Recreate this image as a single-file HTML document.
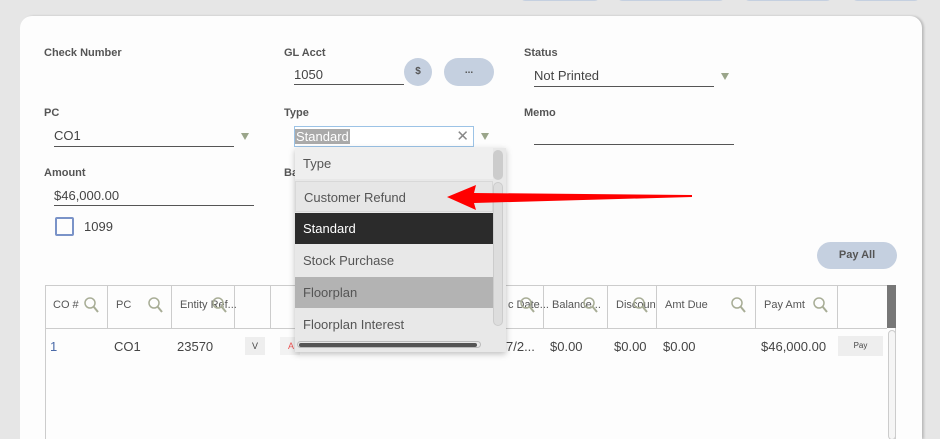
<!DOCTYPE html>
<html><head><style>
*{box-sizing:border-box;margin:0;padding:0}
html,body{width:940px;height:439px;overflow:hidden}
body{background:#e6e6e6;font-family:"Liberation Sans",sans-serif;position:relative;color:#444}
.a{position:absolute}
.card{left:20px;top:16px;width:902px;height:423px;background:#fdfdfd;border-radius:12px 12px 0 0;box-shadow:2px 0 2px #bbb}
.lbl{font-size:11px;font-weight:bold;color:#555}
.inp{font-size:13px;color:#444;border-bottom:1px solid #555;padding-left:0}
.tri{width:0;height:0;border-left:4px solid transparent;border-right:4px solid transparent;border-top:7px solid #9aa58a}
.btn{background:#c5d0e0;border-radius:14px;font-size:10px;font-weight:bold;color:#555;text-align:center}
.th{font-size:11px;color:#555;top:299px}
.vl{top:286px;width:1px;height:42px;background:#ccc}
.td{font-size:13px;color:#444;top:339px}
.mg{position:absolute;top:297px}
.dd div.it{position:absolute;left:0;width:198px;height:31px;font-size:13px;padding:8px 8px;color:#555}
</style></head><body>
<div class="a btn" style="left:520px;top:-10px;width:80px;height:11px"></div>
<div class="a btn" style="left:617px;top:-10px;width:108px;height:11px"></div>
<div class="a btn" style="left:744px;top:-10px;width:88px;height:11px"></div>
<div class="a btn" style="left:852px;top:-10px;width:68px;height:11px"></div>
<div class="a card"></div>

<div class="a lbl" style="left:44px;top:47px">Check Number</div>
<div class="a lbl" style="left:284px;top:47px">GL Acct</div>
<div class="a inp" style="left:294px;top:67px;width:110px;height:18px">1050</div>
<div class="a btn" style="left:404px;top:58px;width:28px;height:28px;line-height:28px">$</div>
<div class="a btn" style="left:444px;top:58px;width:50px;height:28px;line-height:26px">...</div>
<div class="a lbl" style="left:524px;top:47px">Status</div>
<div class="a inp" style="left:534px;top:68px;width:180px;height:19px">Not Printed</div>
<div class="a tri" style="left:721px;top:73px"></div>

<div class="a lbl" style="left:44px;top:107px">PC</div>
<div class="a inp" style="left:54px;top:128px;width:180px;height:19px">CO1</div>
<div class="a tri" style="left:241px;top:133px"></div>
<div class="a lbl" style="left:284px;top:107px">Type</div>
<div class="a" style="left:294px;top:126px;width:180px;height:21px;border:1px solid #9cc3e6;background:#fff;font-size:13px;color:#fff;line-height:19px"><span style="background:#aaa;padding:0 1px">Standard</span><span style="position:absolute;right:4px;top:0;color:#888;font-size:15px;line-height:19px">✕</span></div>
<div class="a tri" style="left:481px;top:133px"></div>
<div class="a lbl" style="left:524px;top:107px">Memo</div>
<div class="a" style="left:534px;top:144px;width:200px;height:1px;background:#555"></div>

<div class="a lbl" style="left:44px;top:167px">Amount</div>
<div class="a lbl" style="left:284px;top:167px">Ba</div>
<div class="a inp" style="left:54px;top:188px;width:200px;height:18px">$46,000.00</div>
<div class="a" style="left:55px;top:217px;width:19px;height:19px;border:2px solid #7a93c8;border-radius:2px"></div>
<div class="a" style="left:84px;top:219px;font-size:13px">1099</div>

<div class="a btn" style="left:817px;top:242px;width:80px;height:27px;line-height:27px;font-size:11px">Pay All</div>

<div class="a" style="left:45px;top:285px;width:851px;height:160px;border:1px solid #ccc;background:#fdfdfd"></div>
<div class="a" style="left:45px;top:328px;width:842px;height:1px;background:#ccc"></div>
<div class="a" style="left:887px;top:285px;width:9px;height:43px;background:#777"></div>
<div class="a" style="left:888px;top:330px;width:8px;height:110px;border:1px solid #ccc;border-radius:4px;background:#f5f5f5"></div>
<div class="a vl" style="left:107px"></div><div class="a vl" style="left:171px"></div><div class="a vl" style="left:234px"></div><div class="a vl" style="left:270px"></div><div class="a vl" style="left:543px"></div><div class="a vl" style="left:607px"></div><div class="a vl" style="left:656px"></div><div class="a vl" style="left:755px"></div><div class="a vl" style="left:837px"></div>
<div class="a th" style="left:53px">CO #</div><div class="a th" style="left:116px">PC</div><div class="a th" style="left:180px">Entity Ref...</div><div class="a th" style="left:508px">c Date...</div><div class="a th" style="left:552px">Balance...</div><div class="a th" style="left:616px">Discoun</div><div class="a th" style="left:665px">Amt Due</div><div class="a th" style="left:764px">Pay Amt</div>
<svg class="mg" style="left:84px" width="16" height="18"><circle cx="6" cy="6" r="5" fill="none" stroke="#a8ad96" stroke-width="1.5"/><line x1="9.5" y1="9.5" x2="14" y2="15" stroke="#a8ad96" stroke-width="2"/></svg>
<svg class="mg" style="left:148px" width="16" height="18"><circle cx="6" cy="6" r="5" fill="none" stroke="#a8ad96" stroke-width="1.5"/><line x1="9.5" y1="9.5" x2="14" y2="15" stroke="#a8ad96" stroke-width="2"/></svg>
<svg class="mg" style="left:212px" width="16" height="18"><circle cx="6" cy="6" r="5" fill="none" stroke="#a8ad96" stroke-width="1.5"/><line x1="9.5" y1="9.5" x2="14" y2="15" stroke="#a8ad96" stroke-width="2"/></svg>
<svg class="mg" style="left:520px" width="16" height="18"><circle cx="6" cy="6" r="5" fill="none" stroke="#a8ad96" stroke-width="1.5"/><line x1="9.5" y1="9.5" x2="14" y2="15" stroke="#a8ad96" stroke-width="2"/></svg>
<svg class="mg" style="left:583px" width="16" height="18"><circle cx="6" cy="6" r="5" fill="none" stroke="#a8ad96" stroke-width="1.5"/><line x1="9.5" y1="9.5" x2="14" y2="15" stroke="#a8ad96" stroke-width="2"/></svg>
<svg class="mg" style="left:633px" width="16" height="18"><circle cx="6" cy="6" r="5" fill="none" stroke="#a8ad96" stroke-width="1.5"/><line x1="9.5" y1="9.5" x2="14" y2="15" stroke="#a8ad96" stroke-width="2"/></svg>
<svg class="mg" style="left:731px" width="16" height="18"><circle cx="6" cy="6" r="5" fill="none" stroke="#a8ad96" stroke-width="1.5"/><line x1="9.5" y1="9.5" x2="14" y2="15" stroke="#a8ad96" stroke-width="2"/></svg>
<svg class="mg" style="left:813px" width="16" height="18"><circle cx="6" cy="6" r="5" fill="none" stroke="#a8ad96" stroke-width="1.5"/><line x1="9.5" y1="9.5" x2="14" y2="15" stroke="#a8ad96" stroke-width="2"/></svg>
<div class="a td" style="left:50px;color:#4a6aa8">1</div><div class="a td" style="left:114px">CO1</div><div class="a td" style="left:177px">23570</div>
<div class="a" style="left:245px;top:337px;width:20px;height:18px;background:#eee;font-size:9px;text-align:center;line-height:18px">V</div>
<div class="a" style="left:280px;top:337px;width:20px;height:18px;background:#f2f2f2;font-size:9px;color:#e55;padding-left:8px;line-height:18px">A</div>
<div class="a td" style="left:506px">7/2...</div><div class="a td" style="left:550px">$0.00</div><div class="a td" style="left:614px">$0.00</div><div class="a td" style="left:663px">$0.00</div><div class="a td" style="left:761px">$46,000.00</div>
<div class="a" style="left:838px;top:336px;width:45px;height:20px;background:#eee;font-size:8px;text-align:center;line-height:20px">Pay</div>

<div class="a dd" style="left:295px;top:148px;width:211px;height:204px;background:#e8e8e8;box-shadow:0 2px 6px rgba(0,0,0,.25)">
<div class="it" style="top:0;background:#efefef">Type</div>
<div class="it" style="top:33px;background:#e6e6e6;border:1px solid #d8d8d8;">Customer Refund</div>
<div class="it" style="top:65px;background:#2b2b2b;color:#fff">Standard</div>
<div class="it" style="top:97px;background:#e8e8e8">Stock Purchase</div>
<div class="it" style="top:129px;background:#b3b3b3">Floorplan</div>
<div class="it" style="top:161px;background:#e8e8e8">Floorplan Interest</div>
<div class="a" style="left:198px;top:2px;width:10px;height:30px;background:#ccc;border-radius:5px"></div>
<div class="a" style="left:198px;top:34px;width:10px;height:144px;background:#ddd;border:1px solid #ccc;border-radius:5px"></div>
<div class="a" style="left:2px;top:193px;width:184px;height:7px;border:1px solid #bbb;border-radius:4px"></div>
<div class="a" style="left:4px;top:195px;width:178px;height:4px;background:#555;border-radius:2px"></div>
</div>

<svg class="a" style="left:440px;top:180px" width="260" height="35"><polygon points="7,17 36,5 34,13 252,15 252,17 34,23 36,30" fill="#f00"/></svg>
</body></html>
